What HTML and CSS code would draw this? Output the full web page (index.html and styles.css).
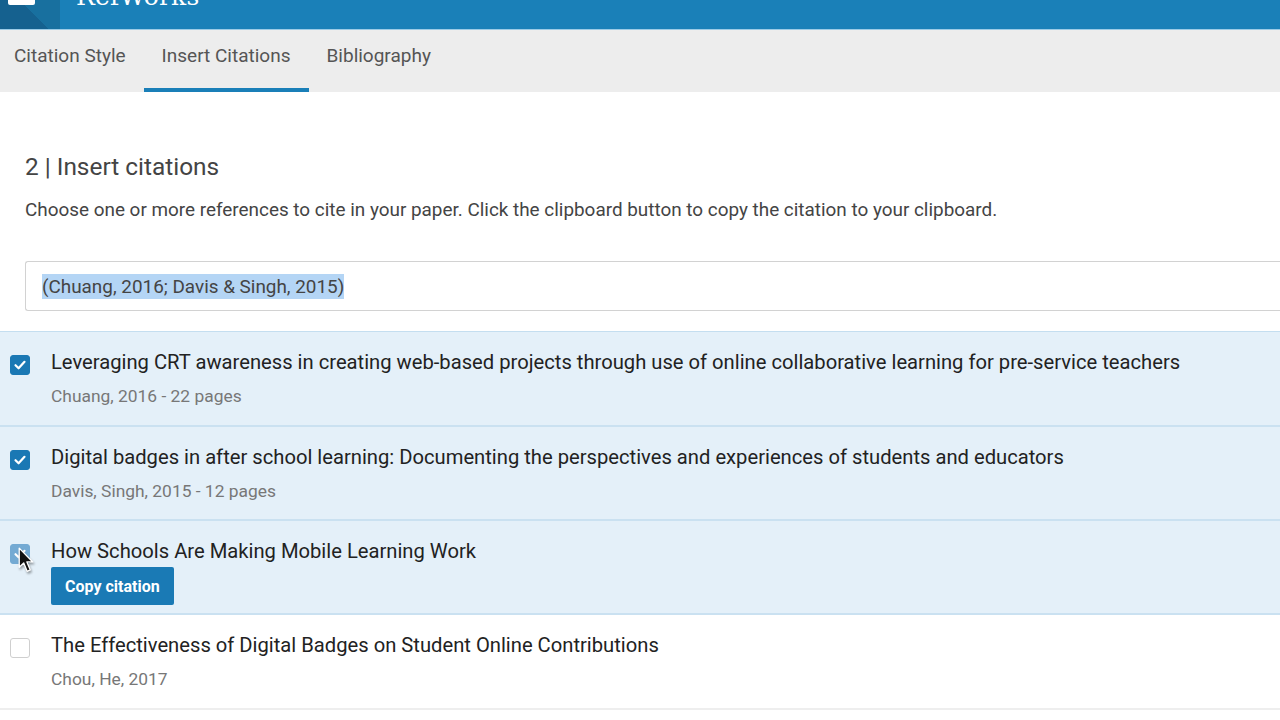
FILE: index.html
```
<!DOCTYPE html>
<html>
<head>
<meta charset="utf-8">
<link rel="stylesheet" href="styles.css">
</head>
<body>
<header class="topbar">
  <div class="menu-square"><span class="menu-bar"></span></div>
  <div class="brand">RefWorks</div>
</header>
<nav class="tabs">
  <div class="tab first">Citation Style</div>
  <div class="tab active">Insert Citations</div>
  <div class="tab">Bibliography</div>
</nav>
<main class="content">
  <h2 class="step-title">2 | Insert citations</h2>
  <p class="desc">Choose one or more references to cite in your paper. Click the clipboard button to copy the citation to your clipboard.</p>
  <div class="citation-box"><span class="selected">(Chuang, 2016; Davis &amp; Singh, 2015)</span></div>
</main>
<ul class="refs">
  <li class="ref checked">
    <span class="cb on"><svg viewBox="0 0 20 20" width="20" height="20"><path d="M5.5 10.2 L8.6 13.3 L14.5 6.8" fill="none" stroke="#fff" stroke-width="2.2" stroke-linecap="round" stroke-linejoin="round"/></svg></span>
    <div class="ref-body">
      <div class="ref-title">Leveraging CRT awareness in creating web-based projects through use of online collaborative learning for pre-service teachers</div>
      <div class="ref-meta">Chuang, 2016 - 22 pages</div>
    </div>
  </li>
  <li class="ref checked">
    <span class="cb on"><svg viewBox="0 0 20 20" width="20" height="20"><path d="M5.5 10.2 L8.6 13.3 L14.5 6.8" fill="none" stroke="#fff" stroke-width="2.2" stroke-linecap="round" stroke-linejoin="round"/></svg></span>
    <div class="ref-body">
      <div class="ref-title">Digital badges in after school learning: Documenting the perspectives and experiences of students and educators</div>
      <div class="ref-meta">Davis, Singh, 2015 - 12 pages</div>
    </div>
  </li>
  <li class="ref checked hover">
    <span class="cb on light"><svg viewBox="0 0 20 20" width="20" height="20"><path d="M5.5 10.2 L8.6 13.3 L14.5 6.8" fill="none" stroke="#fff" stroke-width="2.2" stroke-linecap="round" stroke-linejoin="round"/></svg>
      <svg class="cursor" viewBox="0 0 14 23" width="16" height="26"><path d="M1 1 L1 18 L5 14.2 L8 21.5 L10.8 20.3 L7.8 13.2 L13 13.2 Z" fill="#111" stroke="#fff" stroke-width="1.2" stroke-linejoin="round"/></svg>
    </span>
    <div class="ref-body">
      <div class="ref-title">How Schools Are Making Mobile Learning Work</div>
      <button class="copy-btn">Copy citation</button>
    </div>
  </li>
  <li class="ref">
    <span class="cb"></span>
    <div class="ref-body">
      <div class="ref-title">The Effectiveness of Digital Badges on Student Online Contributions</div>
      <div class="ref-meta">Chou, He, 2017</div>
    </div>
  </li>
</ul>
</body>
</html>
```
FILE: styles.css
```
* { box-sizing: border-box; }
html, body { margin: 0; padding: 0; }
body {
  width: 1280px;
  height: 720px;
  overflow: hidden;
  background: #fff;
  font-family: Roboto, "Noto Sans", sans-serif;
  color: #333;
}
.topbar {
  height: 30px;
  background: #1a80b8;
  border-bottom: 1px solid #9ccbe6;
  display: flex;
  align-items: flex-end;
  overflow: hidden;
}
.menu-square {
  width: 60px;
  height: 29px;
  flex: none;
  background: linear-gradient(45deg, #15618f 55%, #18709f 55%);
  position: relative;
}
.menu-bar {
  position: absolute;
  left: 8px;
  top: 0;
  width: 27px;
  height: 5px;
  background: #fff;
  border-radius: 0 0 2px 2px;
}
.brand {
  margin-left: 16px;
  font-family: "DejaVu Serif", "Liberation Serif", serif;
  font-size: 25px;
  line-height: 25px;
  color: #fff;
  height: 29px;
  display: flex;
  align-items: flex-end;
  padding-bottom: 20px;
  letter-spacing: 0.2px;
}
.tabs {
  height: 62px;
  background: #ededed;
  display: flex;
}
.tab {
  padding: 0 18px 8px;
  font-size: 19px;
  color: #555;
  border-bottom: 4px solid transparent;
  height: 62px;
  display: flex;
  align-items: center;
}
.tab.first { padding-left: 14px; }
.tab.active { border-bottom-color: #1a7fb8; }
.content { padding: 0 0 0 25px; }
.step-title {
  margin: 0;
  padding-top: 61px;
  font-size: 24.4px;
  font-weight: 400;
  line-height: 28px;
  color: #444;
}
.desc {
  margin: 18px 0 0;
  font-size: 18.9px;
  line-height: 22px;
  color: #444;
  white-space: nowrap;
}
.citation-box {
  margin-top: 40px;
  height: 50px;
  border: 1px solid #d2d2d2;
  border-right: none;
  border-radius: 3px 0 0 3px;
  padding-left: 16px;
  display: flex;
  align-items: center;
  font-size: 18.9px;
  color: #444;
}
.selected { background: #b4d5f5; line-height: 25px; }
.refs {
  list-style: none;
  margin: 20px 0 0;
  padding: 0;
  border-top: 1px solid #c4def0;
}
.ref {
  display: flex;
  align-items: flex-start;
  padding: 18px 0 18px 10px;
  height: 94px;
  border-bottom: 2px solid #eeeeee;
}
.ref:first-child { height: 95px; }
.ref:last-child { height: 95px; }
.ref.checked {
  background: #e4f0f9;
  border-bottom-color: #cae1f1;
}
.ref.hover { padding-bottom: 8px; }
.cb {
  flex: none;
  width: 20px;
  height: 20px;
  margin-top: 5px;
  border: 1px solid #cfcfcf;
  border-radius: 3px;
  background: #fff;
  position: relative;
}
.cb.on { background: #1a78b4; border-color: #1a78b4; }
.cb.on svg { display: block; margin: -1px; }
.cb.light { background: #74aad3; border-color: #74aad3; }
.cb .cursor {
  position: absolute;
  left: 8px;
  top: 3px;
  margin: 0;
  filter: drop-shadow(1px 2px 1px rgba(0,0,0,0.35));
}
.ref-body { margin-left: 21px; }
.ref-title {
  font-size: 20.2px;
  line-height: 24px;
  color: #222;
  white-space: nowrap;
}
.ref-meta {
  margin-top: 10px;
  font-size: 17.4px;
  line-height: 24px;
  color: #777;
}
.copy-btn {
  display: block;
  margin-top: 4px;
  height: 38px;
  padding: 0 14px;
  border: none;
  border-radius: 2px;
  background: #1a7ab5;
  color: #fff;
  font-family: Roboto, sans-serif;
  font-weight: 700;
  font-size: 16px;
}
```
